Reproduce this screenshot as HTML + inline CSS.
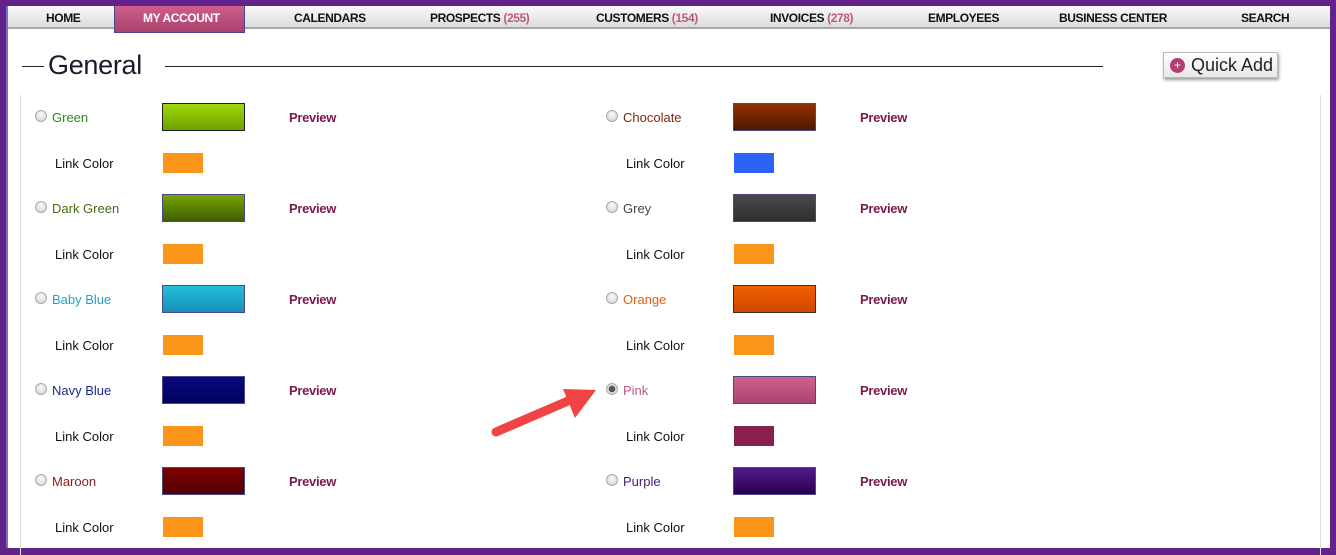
<!DOCTYPE html>
<html><head><meta charset="utf-8"><style>
*{margin:0;padding:0;box-sizing:border-box}
body{width:1336px;height:554px;background:#63218a;position:relative;overflow:hidden;font-family:"Liberation Sans",sans-serif}
#page{position:absolute;left:6px;top:6px;width:1324px;height:542px;background:#fff;border-left:2px solid #7a6fd0}
.nav{position:absolute;left:0;top:0;width:1322px;height:23px;background:linear-gradient(#fafafa,#dcdcdc);border-bottom:2px solid #a8a8a8}
.nav span{position:absolute;top:5px;font-size:12px;font-weight:bold;color:#111;letter-spacing:-0.4px;white-space:nowrap}
.nav span i{font-style:normal;color:#c0587f}
.act{position:absolute;left:106px;top:0;width:131px;height:27px;background:linear-gradient(#cf5e8c,#a9416c);border:1px solid #4a4590;border-top:none}
.act span{color:#fff!important;left:28px}
.a{position:absolute;white-space:nowrap}
.rad{position:absolute;width:12px;height:12px;border-radius:50%;background:radial-gradient(circle at 50% 35%,#fafafa,#cfcfcf);border:1px solid #aaa}
.big{position:absolute;width:83px;height:28px;border:1px solid #4a4a8a}
.sm{position:absolute;width:40px;height:20px}
.lab{position:absolute;font-size:13px;white-space:nowrap;margin-top:1px}
.pv{position:absolute;font-size:13px;font-weight:bold;color:#7a1a4a;letter-spacing:-0.3px;margin-top:1px}
.lc{position:absolute;font-size:13px;color:#111;margin-top:1px}
</style></head><body>
<div id="page">
<div class="nav">
<span style="left:38px">HOME</span>
<div class="act"><span>MY ACCOUNT</span></div>
<span style="left:286px">CALENDARS</span>
<span style="left:422px">PROSPECTS <i>(255)</i></span>
<span style="left:588px">CUSTOMERS <i>(154)</i></span>
<span style="left:762px">INVOICES <i>(278)</i></span>
<span style="left:920px">EMPLOYEES</span>
<span style="left:1051px">BUSINESS CENTER</span>
<span style="left:1233px">SEARCH</span>
</div>
<div class="a" style="left:14px;top:60px;width:22px;height:1px;background:#222"></div>
<div class="a" style="left:40px;top:44px;font-size:27px;color:#1a1a2a;letter-spacing:-0.3px">General</div>
<div class="a" style="left:157px;top:60px;width:938px;height:1px;background:#222"></div>
<div class="a" style="left:1155px;top:46px;width:115px;height:26px;background:linear-gradient(#fff,#e8e8e8);border:1px solid #bbb;box-shadow:1px 2px 3px rgba(0,0,0,.4);font-size:18px;color:#222;padding-left:27px;line-height:24px">Quick Add<div style="position:absolute;left:6px;top:5px;width:15px;height:15px;border-radius:50%;background:#b23e74;color:#fff;font-size:12px;line-height:14px;text-align:center">+</div></div>
<div class="a" style="left:12px;top:89px;width:1px;height:460px;background:#ddd"></div>
<div class="a" style="left:1312px;top:89px;width:1px;height:460px;background:#ddd"></div>
</div>

<div class="rad" style="left:35px;top:110px"></div><div class="lab" style="left:52px;top:109px;color:#2a8a1a">Green</div>
<div class="big" style="left:162px;top:103px;background:linear-gradient(#9ed80a,#6ea000);border-color:#222"></div><div class="pv" style="left:289px;top:109px">Preview</div>
<div class="lc" style="left:55px;top:155px">Link Color</div><div class="sm" style="left:163px;top:153px;background:#fb961b"></div>

<div class="rad" style="left:35px;top:201px"></div><div class="lab" style="left:52px;top:200px;color:#4a6a10">Dark Green</div>
<div class="big" style="left:162px;top:194px;background:linear-gradient(#76a400,#3e5e00)"></div><div class="pv" style="left:289px;top:200px">Preview</div>
<div class="lc" style="left:55px;top:246px">Link Color</div><div class="sm" style="left:163px;top:244px;background:#fb961b"></div>

<div class="rad" style="left:35px;top:292px"></div><div class="lab" style="left:52px;top:291px;color:#2aa0c8">Baby Blue</div>
<div class="big" style="left:162px;top:285px;background:linear-gradient(#22c0d8,#1890b8)"></div><div class="pv" style="left:289px;top:291px">Preview</div>
<div class="lc" style="left:55px;top:337px">Link Color</div><div class="sm" style="left:163px;top:335px;background:#fb961b"></div>

<div class="rad" style="left:35px;top:383px"></div><div class="lab" style="left:52px;top:382px;color:#1a2a8a">Navy Blue</div>
<div class="big" style="left:162px;top:376px;background:linear-gradient(#0a0a80,#000060)"></div><div class="pv" style="left:289px;top:382px">Preview</div>
<div class="lc" style="left:55px;top:428px">Link Color</div><div class="sm" style="left:163px;top:426px;background:#fb961b"></div>

<div class="rad" style="left:35px;top:474px"></div><div class="lab" style="left:52px;top:473px;color:#8a1a1a">Maroon</div>
<div class="big" style="left:162px;top:467px;background:linear-gradient(#800000,#500000)"></div><div class="pv" style="left:289px;top:473px">Preview</div>
<div class="lc" style="left:55px;top:519px">Link Color</div><div class="sm" style="left:163px;top:517px;background:#fb961b"></div>

<div class="rad" style="left:606px;top:110px"></div><div class="lab" style="left:623px;top:109px;color:#7a2a10">Chocolate</div>
<div class="big" style="left:733px;top:103px;background:linear-gradient(#963000,#4a1800)"></div><div class="pv" style="left:860px;top:109px">Preview</div>
<div class="lc" style="left:626px;top:155px">Link Color</div><div class="sm" style="left:734px;top:153px;background:#2d63f5"></div>

<div class="rad" style="left:606px;top:201px"></div><div class="lab" style="left:623px;top:200px;color:#444">Grey</div>
<div class="big" style="left:733px;top:194px;background:linear-gradient(#4a4a4a,#2e2e2e)"></div><div class="pv" style="left:860px;top:200px">Preview</div>
<div class="lc" style="left:626px;top:246px">Link Color</div><div class="sm" style="left:734px;top:244px;background:#fb961b"></div>

<div class="rad" style="left:606px;top:292px"></div><div class="lab" style="left:623px;top:291px;color:#e06010">Orange</div>
<div class="big" style="left:733px;top:285px;background:linear-gradient(#f06000,#d04800);border-color:#333"></div><div class="pv" style="left:860px;top:291px">Preview</div>
<div class="lc" style="left:626px;top:337px">Link Color</div><div class="sm" style="left:734px;top:335px;background:#fb961b"></div>

<div class="rad" style="left:606px;top:383px;background:radial-gradient(circle,#555 0 3px,#ddd 3.5px)"></div><div class="lab" style="left:623px;top:382px;color:#c05888">Pink</div>
<div class="big" style="left:733px;top:376px;background:linear-gradient(#d2608e,#a84470)"></div><div class="pv" style="left:860px;top:382px">Preview</div>
<div class="lc" style="left:626px;top:428px">Link Color</div><div class="sm" style="left:734px;top:426px;background:#8a1e4e"></div>

<div class="rad" style="left:606px;top:474px"></div><div class="lab" style="left:623px;top:473px;color:#4a1a7a">Purple</div>
<div class="big" style="left:733px;top:467px;background:linear-gradient(#521a8a,#2a0050)"></div><div class="pv" style="left:860px;top:473px">Preview</div>
<div class="lc" style="left:626px;top:519px">Link Color</div><div class="sm" style="left:734px;top:517px;background:#fb961b"></div>

<svg class="a" style="left:0;top:0" width="1336" height="554">
<line x1="496" y1="432" x2="568" y2="401" stroke="#f04444" stroke-width="9" stroke-linecap="round"/>
<polygon points="596,390 563,389 575,418" fill="#f04444"/>
</svg>
</body></html>
